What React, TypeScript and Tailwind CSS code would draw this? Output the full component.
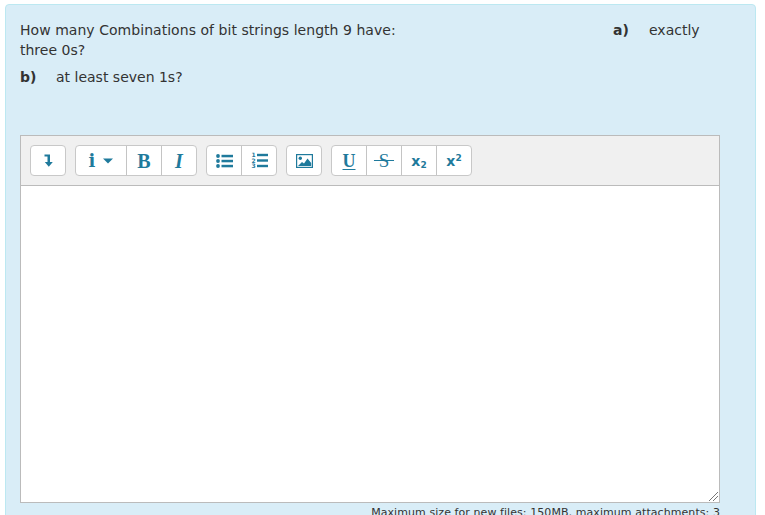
import React from "react";

const C = "#1f7a9c";

function Btn({ w, children, last }: { w: string; children: React.ReactNode; last?: boolean }) {
  return (
    <div className={`${w} h-full flex items-center justify-center ${last ? "" : "border-r border-[#c4c4c4]"}`}>
      {children}
    </div>
  );
}

function Group({ children }: { children: React.ReactNode }) {
  return (
    <div className="flex h-[31px] bg-white border border-[#c8c8c8] rounded-[4px] box-border">{children}</div>
  );
}

function ListBullet() {
  return (
    <svg width="17" height="14" viewBox="0 0 17 14" fill={C}>
      <circle cx="2" cy="2" r="1.9" />
      <circle cx="2" cy="7" r="1.9" />
      <circle cx="2" cy="12" r="1.9" />
      <rect x="5.5" y="0.8" width="11.5" height="2.5" />
      <rect x="5.5" y="5.8" width="11.5" height="2.5" />
      <rect x="5.5" y="10.8" width="11.5" height="2.5" />
    </svg>
  );
}

function ListNumber() {
  return (
    <svg width="17" height="17" viewBox="0 0 17 17" fill={C}>
      <rect x="6" y="1.8" width="11" height="2.4" />
      <rect x="6" y="7.3" width="11" height="2.4" />
      <rect x="6" y="12.8" width="11" height="2.4" />
      <text x="0.5" y="5" fontSize="6" fontWeight="700" fontFamily="DejaVu Sans">1</text>
      <text x="0.5" y="10.5" fontSize="6" fontWeight="700" fontFamily="DejaVu Sans">2</text>
      <text x="0.5" y="16" fontSize="6" fontWeight="700" fontFamily="DejaVu Sans">3</text>
    </svg>
  );
}

function ImageIcon() {
  return (
    <svg width="17" height="14" viewBox="0 0 17 14">
      <rect x="0.6" y="0.6" width="15.8" height="12.8" fill="none" stroke={C} strokeWidth="1.2" />
      <circle cx="4.3" cy="4.3" r="1.7" fill={C} />
      <path d="M2 12 L6 8 L8 9.5 L11.5 4.5 L15.2 9 L15.2 12 Z" fill={C} />
    </svg>
  );
}

function ArrowIcon() {
  return (
    <svg width="9" height="13" viewBox="0 0 9 13" fill={C}>
      <path d="M0.5 0.5 H6 V8 H8.8 L4.8 12.8 L0.8 8 H3.5 V2.5 H0.5 Z" />
    </svg>
  );
}

function Caret() {
  return (
    <svg width="10" height="6" viewBox="0 0 10 6" fill={C}>
      <path d="M0 0.5 H10 L5 5.5 Z" />
    </svg>
  );
}

export default function App() {
  const dejavu = "font-['DejaVu_Sans',sans-serif]";
  const serif = "font-['Liberation_Serif',serif]";
  return (
    <div className={`h-[515px] w-[765px] overflow-hidden bg-white ${dejavu}`}>
      <div className="ml-[5px] mt-[4px] w-[751px] h-[520px] bg-[#d9edf7] border border-[#bce8f1] rounded-[4px] pl-[14px] pt-[15px] box-border text-[14px] leading-[20px] text-[#333]">
        <div className="flex">
          <span className="w-[593px] tracking-[0.04px]">How many Combinations of bit strings length 9 have:</span>
          <b className="w-[36px]">a)</b>
          <span>exactly</span>
        </div>
        <div>three 0s?</div>
        <div className="flex mt-[7px]">
          <b className="w-[36px]">b)</b>
          <span>at least seven 1s?</span>
        </div>

        <div className="mt-[48px] w-[700px] h-[368px] border border-[#bbb] flex flex-col box-border">
          <div className="h-[50px] bg-[#f0f0f0] border-b border-[#bbb] box-border pl-[9px] pt-[9px] flex gap-[9px]">
            <Group>
              <Btn w="w-[34px]" last><ArrowIcon /></Btn>
            </Group>
            <Group>
              <Btn w="w-[51px]">
                <span className="font-['DejaVu_Serif',serif] font-bold text-[18px] text-[#1f7a9c] mr-[8px]">i</span>
                <Caret />
              </Btn>
              <Btn w="w-[35px]"><span className={`${serif} font-bold text-[20px] text-[#1f7a9c]`}>B</span></Btn>
              <Btn w="w-[34px]" last><span className={`${serif} italic font-bold text-[20px] text-[#1f7a9c]`}>I</span></Btn>
            </Group>
            <Group>
              <Btn w="w-[35px]"><ListBullet /></Btn>
              <Btn w="w-[34px]" last><ListNumber /></Btn>
            </Group>
            <Group>
              <Btn w="w-[34px]" last><ImageIcon /></Btn>
            </Group>
            <Group>
              <Btn w="w-[35px]"><span className={`${serif} font-bold text-[18px] text-[#1f7a9c] underline underline-offset-2`}>U</span></Btn>
              <Btn w="w-[35px]"><span className={`${serif} text-[19px] text-[#1f7a9c] line-through`}>&nbsp;S&nbsp;</span></Btn>
              <Btn w="w-[35px]"><span className="font-bold text-[14px] text-[#1f7a9c] leading-none">x<sub className="text-[9px]">2</sub></span></Btn>
              <Btn w="w-[34px]" last><span className="font-bold text-[14px] text-[#1f7a9c] leading-none">x<sup className="text-[9px]">2</sup></span></Btn>
            </Group>
          </div>
          <div className="flex-1 bg-white relative">
            <svg className="absolute right-[1px] bottom-[1px]" width="10" height="10" viewBox="0 0 10 10" stroke="#777" strokeWidth="1">
              <path d="M1 10 L10 1 M5 10 L10 5" />
            </svg>
          </div>
        </div>

        <div className="w-[700px] text-right text-[11px] leading-[14px] mt-[3px] tracking-[0.07px] text-[#333]">
          Maximum size for new files: 150MB, maximum attachments: 3
        </div>
      </div>
    </div>
  );
}
